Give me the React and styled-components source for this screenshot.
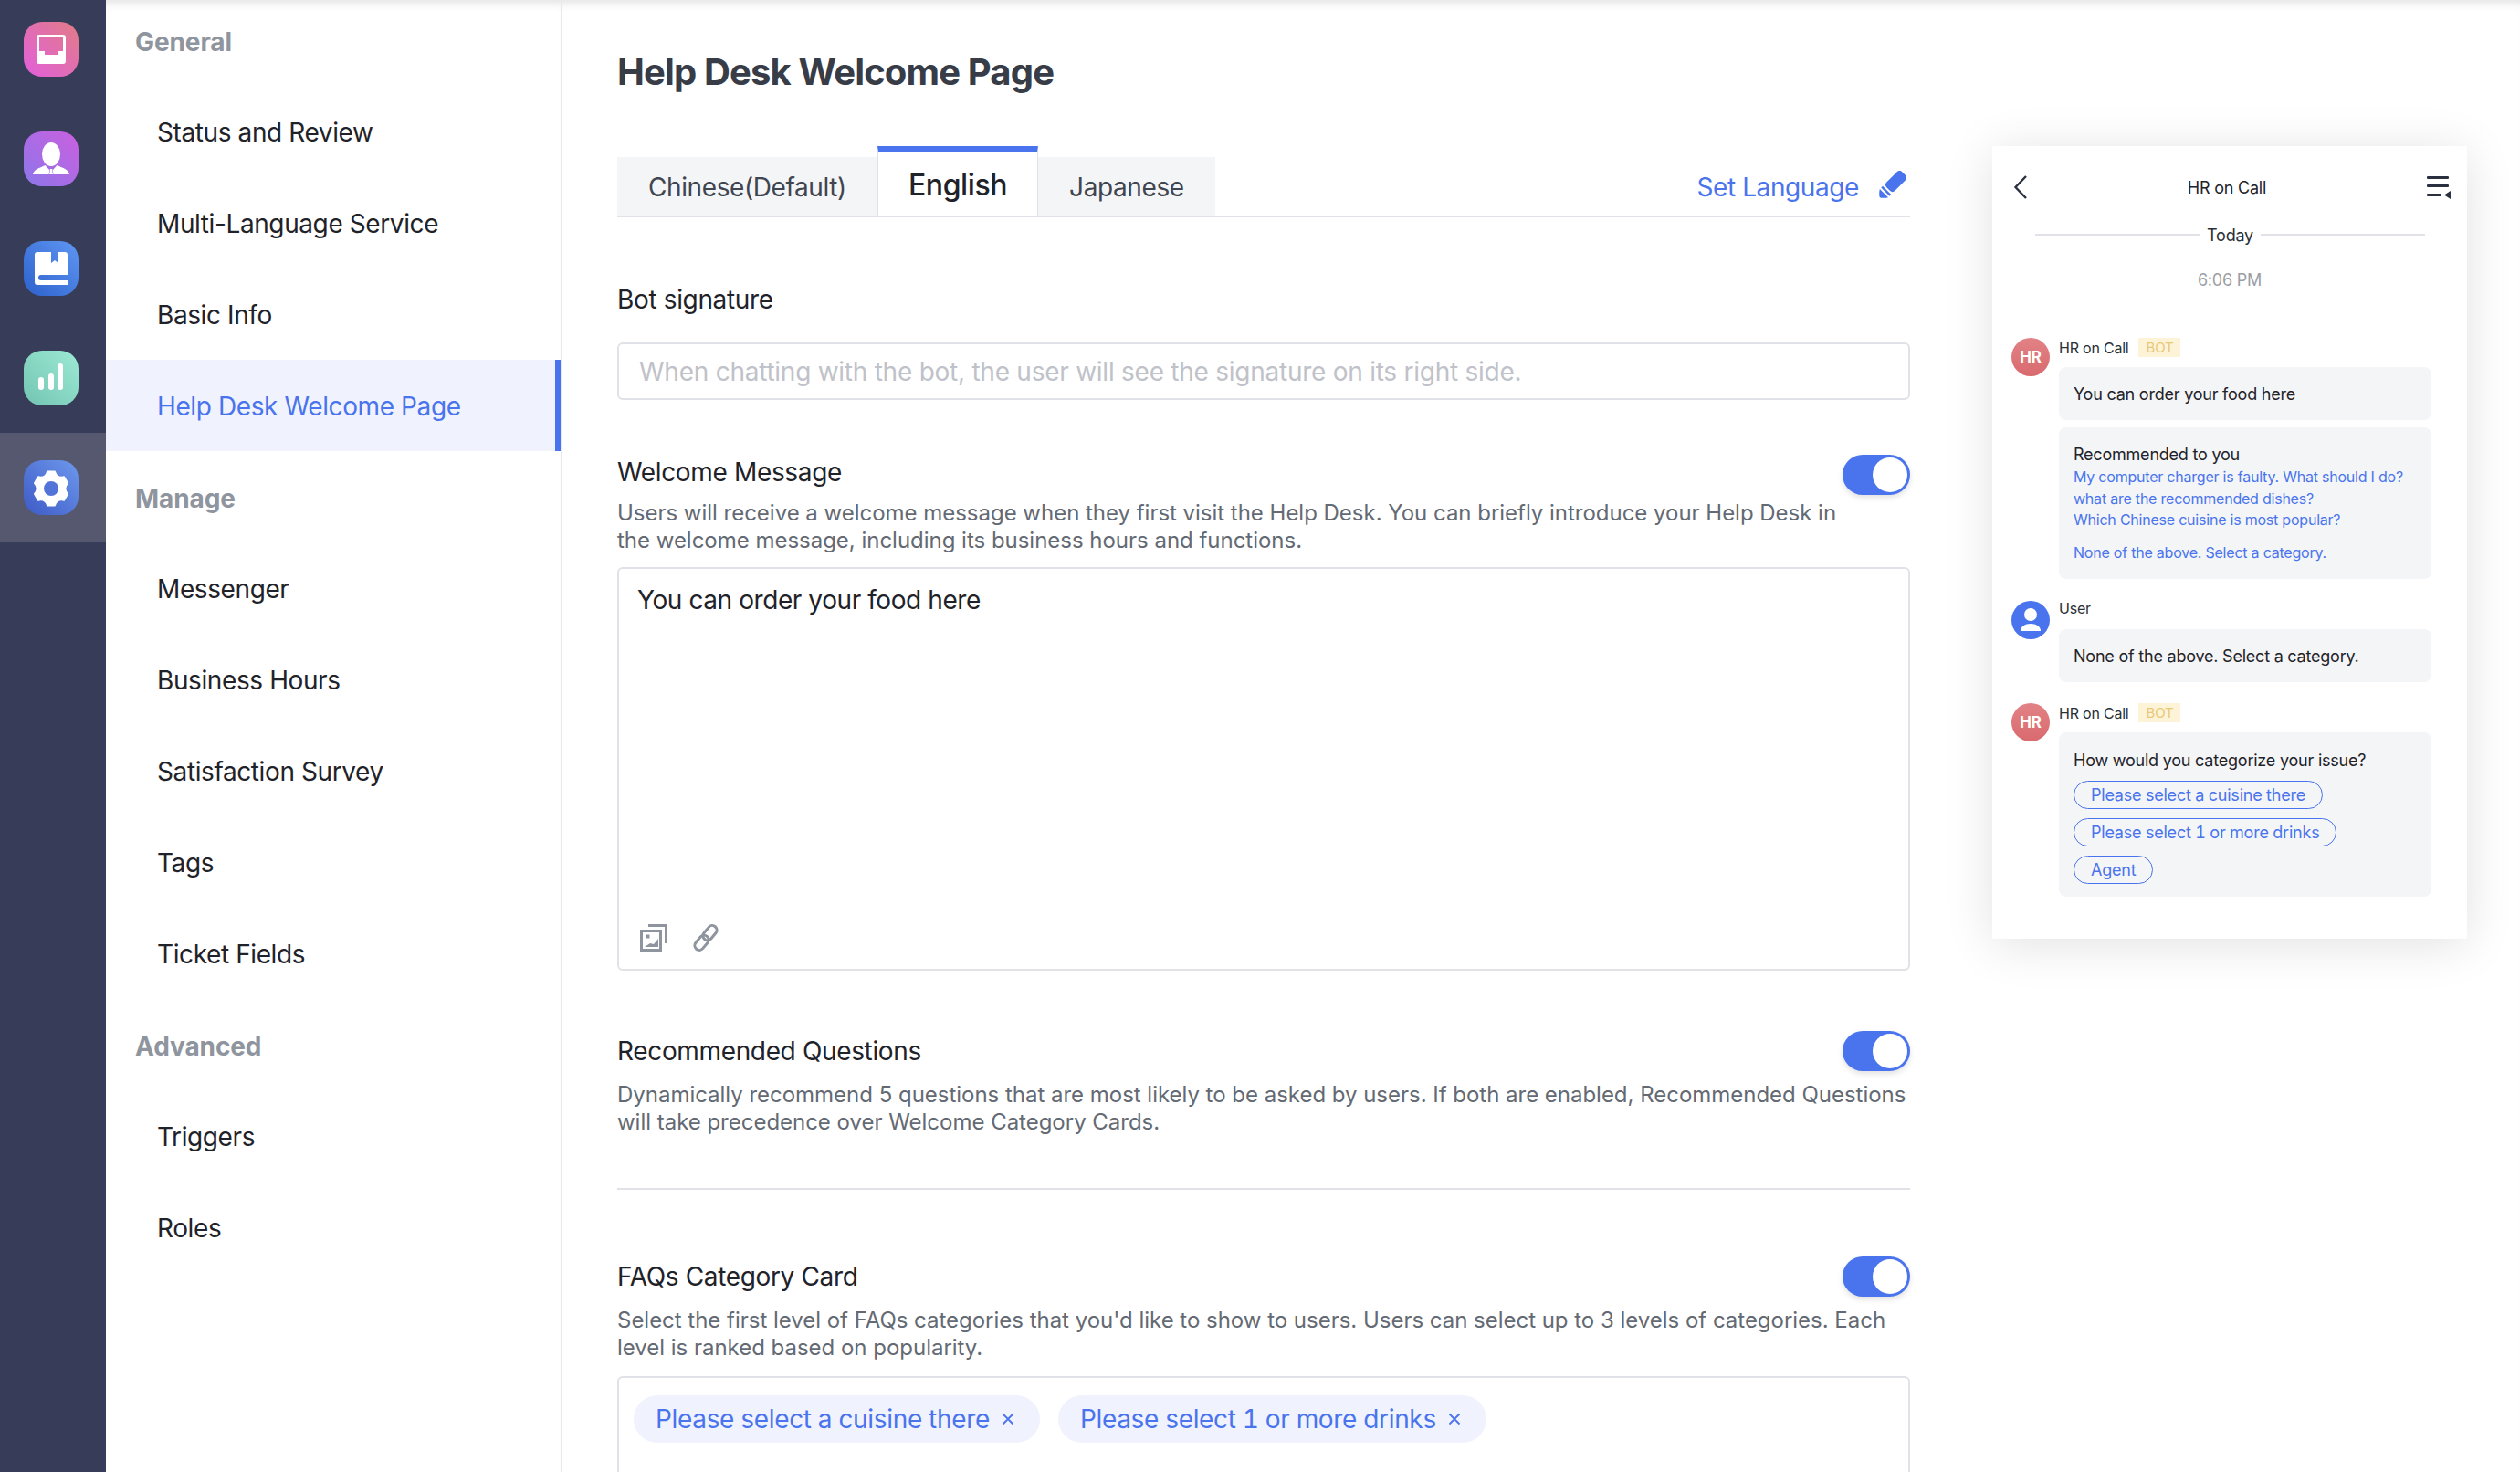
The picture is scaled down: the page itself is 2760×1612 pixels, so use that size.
import styled, { createGlobalStyle } from "styled-components"

const GlobalStyle = createGlobalStyle`
  html, body {
    margin: 0;
    padding: 0;
    background: #fff;
    font-family: "Inter", "Liberation Sans", sans-serif;
    color: #1f2329;
  }
  * { box-sizing: border-box; }
`

const Page = styled.div`
  display: flex;
  width: 2760px;
  height: 1612px;
  overflow: hidden;
  background: #fff;
`

/* left icon rail */
const Rail = styled.nav`
  flex: 0 0 116px;
  background: #373c58;
`
const RailList = styled.div`
  margin-top: -6px;
  display: flex;
  flex-direction: column;
`
const RailItem = styled.div`
  height: 120px;
  display: flex;
  align-items: center;
  padding-left: 26px;
  background: ${(props) => (props.$active ? "#56586f" : "transparent")};
`
const RailTile = styled.div`
  width: 60px;
  height: 60px;
  border-radius: 20px;
  background: linear-gradient(to top right, ${(props) => props.$from}, ${(props) => props.$to});
  svg { display: block; }
`

/* menu column */
const Sidebar = styled.aside`
  flex: 0 0 500px;
  border-right: 2px solid #e8e9ed;
  box-shadow: inset 0 12px 14px -12px rgba(0, 0, 0, 0.18);
`
const SideList = styled.div`
  margin-top: -6px;
`
const SideHeading = styled.div`
  height: 100px;
  padding: 4px 0 0 32px;
  display: flex;
  align-items: center;
  font-size: 28px;
  font-weight: 700;
  letter-spacing: -0.1px;
  color: #8f959e;
`
const SideItem = styled.div`
  height: 100px;
  padding: 2px 0 0 56px;
  display: flex;
  align-items: center;
  font-size: 28px;
  letter-spacing: -0.4px;
  color: ${(props) => (props.$active ? "#4a74ed" : "#1f2329")};
  background: ${(props) => (props.$active ? "#f0f3fd" : "transparent")};
  border-right: 6px solid ${(props) => (props.$active ? "#4a74ed" : "transparent")};
`

/* everything right of the menu */
const Content = styled.div`
  flex: 1;
  display: flex;
  align-items: flex-start;
  height: 100%;
  box-shadow: inset 0 12px 14px -12px rgba(0, 0, 0, 0.18);
`

/* main form */
const Main = styled.main`
  flex: 0 0 1476px;
  padding: 55px 0 0 60px;
`
const Title = styled.h1`
  margin: 0;
  font-size: 40px;
  line-height: 48px;
  font-weight: 700;
  letter-spacing: -0.85px;
  color: #383c47;
`
const TabBar = styled.div`
  margin-top: 57px;
  height: 78px;
  display: flex;
  align-items: flex-end;
  border-bottom: 2px solid #e1e2e8;
`
const Tab = styled.div`
  height: ${(props) => (props.$active ? "76px" : "64px")};
  padding: 2px ${(props) => (props.$active ? "33px" : "34px")} 0;
  display: flex;
  align-items: center;
  font-size: ${(props) => (props.$active ? "32px" : "28px")};
  font-weight: ${(props) => (props.$active ? 500 : 400)};
  letter-spacing: -0.4px;
  color: ${(props) => (props.$active ? "#1f2329" : "#41454f")};
  background: ${(props) => (props.$active ? "#fff" : "#f4f5f7")};
  border-top: ${(props) => (props.$active ? "6px solid #4a74ed" : "none")};
  border-left: ${(props) => (props.$active ? "1px solid #e1e2e8" : "none")};
  border-right: ${(props) => (props.$active ? "1px solid #e1e2e8" : "none")};
`
const SetLanguage = styled.div`
  margin-left: auto;
  height: 64px;
  display: flex;
  align-items: center;
  gap: 22px;
  padding: 2px 4px 0 0;
  font-size: 28px;
  letter-spacing: -0.4px;
  color: #4a74ed;
`
const PencilSvg = styled.svg`
  display: block;
  margin-bottom: 6px;
`
const FieldLabel = styled.div`
  font-size: 28px;
  line-height: 36px;
  letter-spacing: -0.35px;
  color: #1f2329;
  margin-bottom: ${(props) => props.$lift || 0}px;
`
const BotLabel = styled(FieldLabel)`
  margin-top: 72px;
`
const SignatureInput = styled.div`
  margin-top: 29px;
  height: 63px;
  padding: 1px 22px 0;
  display: flex;
  align-items: center;
  border: 2px solid #e1e2e8;
  border-radius: 6px;
  font-size: 28px;
  letter-spacing: -0.25px;
  color: #c0c2c9;
`
const SectionHead = styled.div`
  margin-top: ${(props) => props.$top}px;
  height: 44px;
  display: flex;
  align-items: center;
  justify-content: space-between;
`
const Toggle = styled.div`
  width: 74px;
  height: 44px;
  border-radius: 22px;
  background: #4a74ed;
  display: flex;
  align-items: center;
  justify-content: flex-end;
  padding-right: 3px;
  box-shadow: 0 3px 6px rgba(0, 0, 0, 0.12);
  &::after {
    content: "";
    width: 38px;
    height: 38px;
    border-radius: 50%;
    background: #fff;
  }
`
const Desc = styled.p`
  margin: ${(props) => props.$top}px 0 0;
  max-width: ${(props) => props.$width || 1416}px;
  font-size: 24px;
  line-height: 30px;
  letter-spacing: -0.02px;
  color: #646a73;
`
const MessageBox = styled.div`
  margin-top: 14px;
  height: 442px;
  border: 2px solid #e1e2e8;
  border-radius: 6px;
  padding: 16px 20px 0 20px;
  display: flex;
  flex-direction: column;
  justify-content: space-between;
  font-size: 28px;
  line-height: 36px;
  letter-spacing: -0.42px;
`
const BoxTools = styled.div`
  display: flex;
  align-items: center;
  gap: 27px;
  margin: 0 0 19px 3px;
  svg { display: block; }
`
const Divider = styled.hr`
  margin: 57px 0 0;
  border: none;
  height: 2px;
  background: #e1e2e8;
`
const ChipBox = styled.div`
  margin-top: 16px;
  height: 300px;
  border: 2px solid #e1e2e8;
  border-radius: 6px;
  padding: 19px 16px;
  display: flex;
  align-items: flex-start;
  gap: 20px;
`
const Chip = styled.div`
  height: 52px;
  padding: 0 27px 0 24px;
  display: flex;
  align-items: center;
  gap: 12px;
  border-radius: 26px;
  background: #f0f3fd;
  color: #4a74ed;
  font-size: 28px;
  font-variant-numeric: tabular-nums;
  letter-spacing: -0.33px;
`

/* chat preview */
const Preview = styled.section`
  flex: 0 0 520px;
  margin: 160px 0 0 90px;
  height: 868px;
  padding: 20px 0 0;
  background: #fff;
  letter-spacing: -0.22px;
  box-shadow: 0 6px 50px rgba(0, 0, 0, 0.12);
`
const ChatHeader = styled.div`
  height: 50px;
  padding: 0 17px 0 23px;
  display: flex;
  align-items: center;
  justify-content: space-between;
  font-size: 18px;
  svg { display: block; }
`
const TodayRow = styled.div`
  margin: 12px 0 0 47px;
  width: 427px;
  height: 30px;
  display: flex;
  align-items: center;
  gap: 8px;
  font-size: 18px;
  color: #2b2f36;
  &::before, &::after {
    content: "";
    flex: 1;
    height: 2px;
    background: #e1e2e8;
  }
`
const TimeRow = styled.div`
  margin-top: 22px;
  height: 26px;
  line-height: 26px;
  text-align: center;
  font-size: 18px;
  color: #9a9ea6;
`
const Messages = styled.div`
  margin-top: 50px;
  padding: 0 39px 0 21px;
`
const Message = styled.div`
  display: flex;
  gap: 10px;
  margin-top: ${(props) => props.$top || 0}px;
`
const Avatar = styled.div`
  flex: 0 0 42px;
  width: 42px;
  height: 42px;
  margin-top: ${(props) => props.$top || 0}px;
  border-radius: 50%;
  display: flex;
  align-items: center;
  justify-content: center;
  background: ${(props) => (props.$user ? "#4a74ed" : "linear-gradient(to bottom, #e28286, #d96a6e)")};
  color: #fff;
  font-size: 17px;
  font-weight: 700;
`
const MessageBody = styled.div`
  flex: 1;
  min-width: 0;
`
const NameRow = styled.div`
  height: 21px;
  margin-bottom: ${(props) => props.$gap || 11}px;
  display: flex;
  align-items: center;
  gap: 11px;
  font-size: 16px;
  color: #2b2f36;
`
const BotBadge = styled.span`
  width: 46px;
  height: 21px;
  display: flex;
  align-items: center;
  justify-content: center;
  background: #fdf3d7;
  color: #e8c876;
  font-size: 15px;
`
const Bubble = styled.div`
  padding: ${(props) => props.$pad || "17px 16px 15px"};
  margin-top: ${(props) => props.$top || 0}px;
  border-radius: 8px;
  background: #f4f5f7;
  font-size: 18px;
  line-height: 26px;
  color: #1f2329;
`
const LinkLine = styled.div`
  font-size: 16px;
  line-height: 23.6px;
  color: #4a74ed;
`
const LastLink = styled(LinkLine)`
  margin: 12.5px 0 1.5px;
`
const PillStack = styled.div`
  margin-top: 9px;
  display: flex;
  flex-direction: column;
  align-items: flex-start;
  gap: 10px;
`
const Pill = styled.div`
  height: 31px;
  padding: 0 18px;
  display: flex;
  align-items: center;
  border: 1.5px solid #4a74ed;
  border-radius: 16px;
  color: #4a74ed;
  font-size: 18px;
  font-variant-numeric: tabular-nums;
`

/* drawn icons */
const gearPath = () => {
  const pt = (deg, r) => {
    const a = (deg * Math.PI) / 180
    return `${(30 + r * Math.cos(a)).toFixed(2)} ${(31 + r * Math.sin(a)).toFixed(2)}`
  }
  let d = `M${pt(-102, 19)}`
  for (let i = 0; i < 6; i++) {
    const c = -90 + i * 60
    d += ` L${pt(c + 12, 19)} Q${pt(c + 30, 12.5)} ${pt(c + 48, 19)}`
  }
  return d + "Z"
}

const InboxIcon = () => (
  <svg width="60" height="60" viewBox="0 0 60 60">
    <path
      fill="#fff"
      fillRule="evenodd"
      d="M17 14h26a3 3 0 0 1 3 3v26a3 3 0 0 1-3 3H17a3 3 0 0 1-3-3V17a3 3 0 0 1 3-3zM17 17h26v15h-6v4H23v-4h-6z"
    />
  </svg>
)
const PersonIcon = () => (
  <svg width="60" height="60" viewBox="0 0 60 60" fill="#fff">
    <ellipse cx="30" cy="25" rx="10" ry="13" />
    <path d="M10 47c1-4 4-6 8-7.500l5.500-2.500 5 5.500-1 4.500zM50 47c-1-4-4-6-8-7.500l-5.500-2.500-5 5.500 1 4.500z" />
    <path d="M28.500 41h3l-.5 2 1 4h-4l1-4z" />
  </svg>
)
const BookIcon = () => (
  <svg width="60" height="60" viewBox="0 0 60 60">
    <path
      fill="#fff"
      fillRule="evenodd"
      d="M15 12h30a3 3 0 0 1 3 3v33H15a3 3 0 0 1-3-3V15a3 3 0 0 1 3-3zM30 12v12l4-3 4 3V12zM19 37h29v6H19a3 3 0 0 1 0-6z"
    />
  </svg>
)
const ChartIcon = () => (
  <svg width="60" height="60" viewBox="0 0 60 60" fill="#fff">
    <rect x="16" y="29" width="6" height="14" rx="3" />
    <rect x="27" y="25" width="6" height="18" rx="3" />
    <rect x="37" y="14" width="6" height="29" rx="3" />
  </svg>
)
const GearIcon = () => (
  <svg width="60" height="60" viewBox="0 0 60 60">
    <path fill="#fff" stroke="#fff" strokeWidth="2" strokeLinejoin="round" fillRule="evenodd" d={gearPath()} />
    <circle cx="30" cy="31" r="8" fill="#5274d8" />
  </svg>
)
const PencilIcon = () => (
  <PencilSvg width="30" height="30" viewBox="0 0 30 30" fill="#4a74ed">
    <g transform="rotate(45 15 15)">
      <rect x="8.500" y="-2" width="13" height="24" rx="4" />
      <rect x="8.500" y="24" width="13" height="2.500" />
      <path d="M8.500 28.500h13C19.500 32 16.500 34.500 15 35 13.500 34.500 10.500 32 8.500 28.500z" />
    </g>
  </PencilSvg>
)
const ImageIcon = () => (
  <svg width="30" height="30" viewBox="0 0 30 30" fill="none" stroke="#8f959e" strokeWidth="3">
    <path d="M9 1.500h19.500V21" />
    <rect x="1.500" y="7.500" width="21" height="21" />
    <rect x="6.500" y="11.500" width="4" height="4" fill="#8f959e" stroke="none" />
    <path d="M5 25l6-4 4 1 5-6v9z" fill="#8f959e" stroke="none" />
  </svg>
)
const LinkIcon = () => (
  <svg width="30" height="30" viewBox="0 0 30 30" fill="none" stroke="#8f959e" strokeWidth="3">
    <g transform="rotate(-50 15 15)">
      <rect x="-1" y="10" width="18" height="10" rx="5" />
      <rect x="13" y="10" width="18" height="10" rx="5" />
    </g>
  </svg>
)
const CrossIcon = () => (
  <svg width="16" height="16" viewBox="0 0 16 16" stroke="#4a74ed" strokeWidth="1.800">
    <path d="M2.500 2.500l11 11M13.500 2.500l-11 11" />
  </svg>
)
const BackIcon = () => (
  <svg width="16" height="28" viewBox="0 0 16 28" fill="none" stroke="#2b3040" strokeWidth="2.400">
    <path d="M14 2L2.500 14 14 26" />
  </svg>
)
const ListIcon = () => (
  <svg width="28" height="26" viewBox="0 0 28 26" fill="#2b3040">
    <rect x="1" y="1" width="24" height="3" rx="1" />
    <rect x="1" y="10" width="24" height="3" rx="1" />
    <rect x="1" y="20" width="16" height="3" rx="1" />
    <path d="M27 17v9l-7-4.500z" />
  </svg>
)
const UserGlyph = () => (
  <svg width="42" height="42" viewBox="0 0 42 42" fill="#fff">
    <circle cx="21" cy="15" r="7" />
    <path d="M10 33c0-5 5-8 11-8s11 3 11 8z" />
  </svg>
)

const railIcons = [
  { from: "#e35fdc", to: "#e07c86", Icon: InboxIcon },
  { from: "#8c76ea", to: "#cb60df", Icon: PersonIcon },
  { from: "#2d61cd", to: "#5f96f2", Icon: BookIcon },
  { from: "#72c4b2", to: "#9deAd5", Icon: ChartIcon },
  { from: "#3d5ac6", to: "#6d98ec", Icon: GearIcon, active: true },
]

const BotHeader = () => (
  <NameRow>
    HR on Call
    <BotBadge>BOT</BotBadge>
  </NameRow>
)

const App = () => {
  return (
    <Page>
      <GlobalStyle />
      <Rail>
        <RailList>
          {railIcons.map(({ from, to, Icon, active }) => (
            <RailItem key={from} $active={active}>
              <RailTile $from={from} $to={to}>
                <Icon />
              </RailTile>
            </RailItem>
          ))}
        </RailList>
      </Rail>

      <Sidebar>
        <SideList>
          <SideHeading>General</SideHeading>
          <SideItem>Status and Review</SideItem>
          <SideItem>Multi-Language Service</SideItem>
          <SideItem>Basic Info</SideItem>
          <SideItem $active>Help Desk Welcome Page</SideItem>
          <SideHeading>Manage</SideHeading>
          <SideItem>Messenger</SideItem>
          <SideItem>Business Hours</SideItem>
          <SideItem>Satisfaction Survey</SideItem>
          <SideItem>Tags</SideItem>
          <SideItem>Ticket Fields</SideItem>
          <SideHeading>Advanced</SideHeading>
          <SideItem>Triggers</SideItem>
          <SideItem>Roles</SideItem>
        </SideList>
      </Sidebar>

      <Content>
        <Main>
          <Title>Help Desk Welcome Page</Title>
          <TabBar>
            <Tab>Chinese(Default)</Tab>
            <Tab $active>English</Tab>
            <Tab>Japanese</Tab>
            <SetLanguage>
              Set Language
              <PencilIcon />
            </SetLanguage>
          </TabBar>

          <BotLabel>Bot signature</BotLabel>
          <SignatureInput>When chatting with the bot, the user will see the signature on its right side.</SignatureInput>

          <SectionHead $top={60}>
            <FieldLabel $lift={6}>Welcome Message</FieldLabel>
            <Toggle />
          </SectionHead>
          <Desc $top={5} $width={1340}>
            Users will receive a welcome message when they first visit the Help Desk. You can briefly introduce your
            Help Desk in the welcome message, including its business hours and functions.
          </Desc>
          <MessageBox>
            <div>You can order your food here</div>
            <BoxTools>
              <ImageIcon />
              <LinkIcon />
            </BoxTools>
          </MessageBox>

          <SectionHead $top={66}>
            <FieldLabel>Recommended Questions</FieldLabel>
            <Toggle />
          </SectionHead>
          <Desc $top={11}>
            Dynamically recommend 5 questions that are most likely to be asked by users. If both are enabled, Recommended
            Questions will take precedence over Welcome Category Cards.
          </Desc>
          <Divider />

          <SectionHead $top={73}>
            <FieldLabel>FAQs Category Card</FieldLabel>
            <Toggle />
          </SectionHead>
          <Desc $top={11}>
            Select the first level of FAQs categories that you'd like to show to users. Users can select up to 3 levels
            of categories. Each level is ranked based on popularity.
          </Desc>
          <ChipBox>
            <Chip>
              Please select a cuisine there
              <CrossIcon />
            </Chip>
            <Chip>
              Please select 1 or more drinks
              <CrossIcon />
            </Chip>
          </ChipBox>
        </Main>

        <Preview>
          <ChatHeader>
            <BackIcon />
            HR on Call
            <ListIcon />
          </ChatHeader>
          <TodayRow>Today</TodayRow>
          <TimeRow>6:06 PM</TimeRow>
          <Messages>
            <Message>
              <Avatar>HR</Avatar>
              <MessageBody>
                <BotHeader />
                <Bubble>You can order your food here</Bubble>
                <Bubble $top={8}>
                  Recommended to you
                  <LinkLine>My computer charger is faulty. What should I do?</LinkLine>
                  <LinkLine>what are the recommended dishes?</LinkLine>
                  <LinkLine>Which Chinese cuisine is most popular?</LinkLine>
                  <LastLink>None of the above. Select a category.</LastLink>
                </Bubble>
              </MessageBody>
            </Message>
            <Message $top={21}>
              <Avatar $user $top={3}>
                <UserGlyph />
              </Avatar>
              <MessageBody>
                <NameRow $gap={13}>User</NameRow>
                <Bubble>None of the above. Select a category.</Bubble>
              </MessageBody>
            </Message>
            <Message $top={23}>
              <Avatar>HR</Avatar>
              <MessageBody>
                <BotHeader />
                <Bubble $pad="18px 16px 14px">
                  How would you categorize your issue?
                  <PillStack>
                    <Pill>Please select a cuisine there</Pill>
                    <Pill>Please select 1 or more drinks</Pill>
                    <Pill>Agent</Pill>
                  </PillStack>
                </Bubble>
              </MessageBody>
            </Message>
          </Messages>
        </Preview>
      </Content>
    </Page>
  )
}

export default App
